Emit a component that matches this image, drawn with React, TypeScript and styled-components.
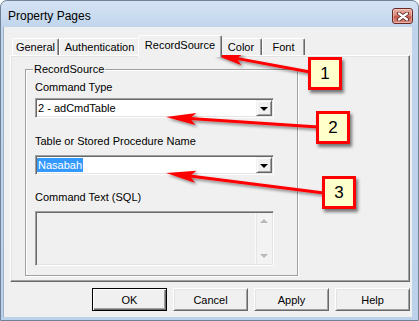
import styled, { createGlobalStyle } from 'styled-components'

const GlobalStyle = createGlobalStyle`
  html, body {
    margin: 0;
    padding: 0;
    background: #fff;
  }
  body {
    font-family: "Liberation Sans", Arial, sans-serif;
    font-size: 11px;
    color: #000;
  }
`

type Pt = [number, number]

const tabs = [
  { label: 'General', width: 47 },
  { label: 'Authentication', width: 81 },
  { label: 'RecordSource', width: 80, active: true },
  { label: 'Color', width: 42 },
  { label: 'Font', width: 43 },
]

const arrows: { tip: Pt; tail: Pt }[] = [
  { tip: [213, 54], tail: [310, 72] },
  { tip: [166, 117], tail: [318, 127] },
  { tip: [166, 173], tail: [324, 193] },
]

const callouts = [
  { n: '1', x: 308, y: 57 },
  { n: '2', x: 316, y: 111 },
  { n: '3', x: 322, y: 176 },
]

export default function App() {
  return (
    <Stage>
      <GlobalStyle />
      <Window>
        <TitleBar>
          <TitleText>Property Pages</TitleText>
          <CloseButton>
            <svg width="12" height="9" viewBox="0 0 12 9">
              <path d="M2 1.5 L10 7.5 M10 1.5 L2 7.5" stroke="#5b2521" strokeWidth="4" strokeLinecap="round" />
              <path d="M2 1.5 L10 7.5 M10 1.5 L2 7.5" stroke="#fff" strokeWidth="2.2" strokeLinecap="round" />
            </svg>
          </CloseButton>
        </TitleBar>

        <Client>
          <TabStrip>
            {tabs.map((t) => (
              <Tab key={t.label} $width={t.width} $active={!!t.active}>
                {t.label}
              </Tab>
            ))}
          </TabStrip>

          <Panel>
            <Group>
              <Caption>RecordSource</Caption>

              <Label $top={11}>Command Type</Label>
              <Combo $top={4}>
                <Value>2 - adCmdTable</Value>
                <DropButton>
                  <Triangle />
                </DropButton>
              </Combo>

              <Label $top={17}>Table or Stored Procedure Name</Label>
              <Combo $top={7}>
                <Value $selected>Nasabah</Value>
                <DropButton>
                  <Triangle />
                </DropButton>
              </Combo>

              <Label $top={16}>Command Text (SQL)</Label>
              <TextBox>
                <Scrollbar>
                  <ScrollArrow>
                    <SmallTriangle $up />
                  </ScrollArrow>
                  <ScrollArrow>
                    <SmallTriangle />
                  </ScrollArrow>
                </Scrollbar>
              </TextBox>
            </Group>
          </Panel>

          <ButtonRow>
            <Button $default>OK</Button>
            <Button>Cancel</Button>
            <Button>Apply</Button>
            <Button>Help</Button>
          </ButtonRow>
        </Client>
      </Window>

      <Overlay width="419" height="321" viewBox="0 0 419 321">
        <defs>
          <filter id="shadow" x="-10%" y="-50%" width="130%" height="200%">
            <feDropShadow dx="2" dy="2" stdDeviation="1.4" floodColor="#000" floodOpacity="0.45" />
          </filter>
        </defs>
        <g filter="url(#shadow)">
          {arrows.map((a, i) => (
            <Arrow key={i} tip={a.tip} tail={a.tail} />
          ))}
        </g>
      </Overlay>

      {callouts.map((c) => (
        <Callout key={c.n} style={{ left: c.x, top: c.y }}>
          {c.n}
        </Callout>
      ))}
    </Stage>
  )
}

function Arrow({ tip, tail }: { tip: Pt; tail: Pt }) {
  const dx = tail[0] - tip[0]
  const dy = tail[1] - tip[1]
  const len = Math.hypot(dx, dy)
  const ux = dx / len
  const uy = dy / len
  const headLen = 30
  const half = 6
  const bx = tip[0] + ux * headLen
  const by = tip[1] + uy * headLen
  const nx = tip[0] + ux * headLen * 0.8
  const ny = tip[1] + uy * headLen * 0.8
  const points = [
    tip,
    [bx - uy * half, by + ux * half],
    [nx, ny],
    [bx + uy * half, by - ux * half],
  ]
    .map((p) => p.join(','))
    .join(' ')

  return (
    <g>
      <line x1={nx} y1={ny} x2={tail[0]} y2={tail[1]} stroke="#ff0000" strokeWidth="3" />
      <polygon points={points} fill="#ff0000" />
    </g>
  )
}

const Stage = styled.div`
  position: relative;
  width: 419px;
  height: 321px;
  overflow: hidden;
`

const Window = styled.div`
  width: 419px;
  height: 321px;
  box-sizing: border-box;
  display: flex;
  flex-direction: column;
  background: linear-gradient(#d6e4f4, #c0d5ec 26px, #bcd2eb);
  border: 1px solid #6f8298;
  border-radius: 7px 7px 0 0;
`

const TitleBar = styled.div`
  height: 26px;
  display: flex;
  justify-content: space-between;
  align-items: flex-start;
  padding: 0 5px 0 7px;
`

const TitleText = styled.div`
  margin-top: 8px;
  font-size: 12px;
  line-height: 14px;
`

const CloseButton = styled.div`
  margin-top: 7px;
  width: 21px;
  height: 16px;
  box-sizing: border-box;
  border: 1px solid #6d2a25;
  border-radius: 3px;
  background: linear-gradient(#eab1a6, #d88474 45%, #c4584c 55%, #d9907f);
  box-shadow: inset 0 0 0 1px rgba(255, 255, 255, 0.35);
  display: flex;
  align-items: center;
  justify-content: center;
`

const Client = styled.div`
  flex: 1;
  margin: 0 6px 3px 2px;
  padding: 0 2px 0 6px;
  background: #f0f0f0;
  border-left: 1px solid #9fb2c8;
  display: flex;
  flex-direction: column;
`

const TabStrip = styled.div`
  margin-top: 8px;
  padding-left: 2px;
  height: 20px;
  display: flex;
  align-items: flex-end;
`

const Tab = styled.div<{ $width: number; $active: boolean }>`
  position: relative;
  z-index: ${(p) => (p.$active ? 2 : 1)};
  box-sizing: border-box;
  width: ${(p) => p.$width + (p.$active ? 4 : 0)}px;
  height: ${(p) => (p.$active ? 22 : 17)}px;
  margin: 0 ${(p) => (p.$active ? -2 : 0)}px ${(p) => (p.$active ? -2 : 0)}px;
  padding-bottom: ${(p) => (p.$active ? 3 : 0)}px;
  background: #f0f0f0;
  border-top: 1px solid #fff;
  border-left: 1px solid #fff;
  border-right: 1px solid #696969;
  border-radius: 2px 2px 0 0;
  box-shadow: inset -1px 0 0 #a0a0a0;
  display: flex;
  align-items: center;
  justify-content: center;
  line-height: 13px;
  white-space: nowrap;
`

const Panel = styled.div`
  position: relative;
  height: 227px;
  box-sizing: border-box;
  padding: 13px 0 0 14px;
  border: 1px solid;
  border-color: #fff #696969 #696969 #fff;
  box-shadow: inset -1px -1px 0 #a0a0a0, inset 1px 1px 0 #e3e3e3;
`

const Group = styled.div`
  position: relative;
  width: 273px;
  height: 207px;
  box-sizing: border-box;
  padding-left: 9px;
  border: 1px solid #a0a0a0;
  box-shadow: 1px 1px 0 #fff, inset 1px 1px 0 #fff;
  display: flex;
  flex-direction: column;
  align-items: flex-start;
`

const Caption = styled.span`
  position: absolute;
  top: -7px;
  left: 7px;
  padding: 0 1px;
  background: #f0f0f0;
  line-height: 13px;
`

const Label = styled.div<{ $top: number }>`
  margin-top: ${(p) => p.$top}px;
  line-height: 13px;
  white-space: nowrap;
`

const Sunken = styled.div`
  box-sizing: border-box;
  width: 239px;
  border: 1px solid;
  border-color: #a0a0a0 #fff #fff #a0a0a0;
  box-shadow: inset 1px 1px 0 #696969, inset -1px -1px 0 #e3e3e3;
  padding: 1px;
  display: flex;
`

const Combo = styled(Sunken)<{ $top: number }>`
  margin-top: ${(p) => p.$top}px;
  height: 20px;
  background: #fff;
  align-items: center;
  justify-content: space-between;
`

const Value = styled.span<{ $selected?: boolean }>`
  margin-left: 0;
  padding: 0 1px;
  line-height: 14px;
  background: ${(p) => (p.$selected ? '#3399ff' : 'transparent')};
  color: ${(p) => (p.$selected ? '#fff' : '#000')};
`

const DropButton = styled.div`
  align-self: stretch;
  width: 16px;
  box-sizing: border-box;
  background: #f0f0f0;
  border: 1px solid;
  border-color: #f0f0f0 #696969 #696969 #f0f0f0;
  box-shadow: inset 1px 1px 0 #fff, inset -1px -1px 0 #a0a0a0;
  display: flex;
  align-items: center;
  justify-content: center;
`

const Triangle = styled.span`
  width: 0;
  height: 0;
  margin-top: 1px;
  border-left: 4px solid transparent;
  border-right: 4px solid transparent;
  border-top: 4px solid #000;
`

const TextBox = styled(Sunken)`
  margin-top: 7px;
  height: 55px;
  background: #f0f0f0;
  justify-content: flex-end;
`

const Scrollbar = styled.div`
  width: 16px;
  background: #f3f3f3;
  border-left: 1px solid #fafafa;
  box-shadow: inset 1px 0 0 #e6e6e6;
  display: flex;
  flex-direction: column;
  justify-content: space-between;
`

const ScrollArrow = styled.div`
  height: 16px;
  display: flex;
  align-items: center;
  justify-content: center;
`

const SmallTriangle = styled.span<{ $up?: boolean }>`
  width: 0;
  height: 0;
  border-left: 4px solid transparent;
  border-right: 4px solid transparent;
  ${(p) => (p.$up ? 'border-bottom: 4px solid #b8b8b8;' : 'border-top: 4px solid #b8b8b8;')}
`

const ButtonRow = styled.div`
  margin-top: 6px;
  display: flex;
  justify-content: flex-end;
  gap: 6px;
`

const Button = styled.button<{ $default?: boolean }>`
  width: 75px;
  height: 23px;
  padding: 0;
  box-sizing: border-box;
  font-family: inherit;
  font-size: 11px;
  color: #000;
  background: #f0f0f0;
  border: 1px solid;
  border-color: ${(p) => (p.$default ? '#000' : '#fff #696969 #696969 #fff')};
  box-shadow: ${(p) =>
    p.$default
      ? 'inset 1px 1px 0 #fff, inset -1px -1px 0 #696969, inset -2px -2px 0 #a0a0a0'
      : 'inset 1px 1px 0 #e3e3e3, inset -1px -1px 0 #a0a0a0'};
`

const Overlay = styled.svg`
  position: absolute;
  left: 0;
  top: 0;
  pointer-events: none;
`

const Callout = styled.div`
  position: absolute;
  width: 34px;
  height: 33px;
  box-sizing: border-box;
  background: #ffffcc;
  border: 3px solid #ff0000;
  box-shadow: 2px 3px 3px rgba(0, 0, 0, 0.5);
  display: flex;
  align-items: center;
  justify-content: center;
  font-size: 17px;
`
